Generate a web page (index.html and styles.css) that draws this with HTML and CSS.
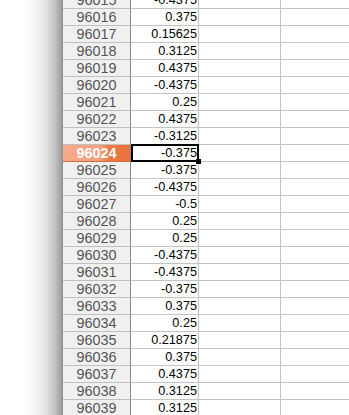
FILE: index.html
```html
<!DOCTYPE html>
<html>
<head>
<meta charset="utf-8">
<link rel="stylesheet" href="styles.css">
</head>
<body>
<div class="page">
  <div class="shadow"></div>
  <div class="sheet">
    <div class="row"><div class="hdr">96015</div><div class="cell num">-0.4375</div><div class="cell b"></div><div class="cell c"></div></div>
    <div class="row"><div class="hdr">96016</div><div class="cell num">0.375</div><div class="cell b"></div><div class="cell c"></div></div>
    <div class="row"><div class="hdr">96017</div><div class="cell num">0.15625</div><div class="cell b"></div><div class="cell c"></div></div>
    <div class="row"><div class="hdr">96018</div><div class="cell num">0.3125</div><div class="cell b"></div><div class="cell c"></div></div>
    <div class="row"><div class="hdr">96019</div><div class="cell num">0.4375</div><div class="cell b"></div><div class="cell c"></div></div>
    <div class="row"><div class="hdr">96020</div><div class="cell num">-0.4375</div><div class="cell b"></div><div class="cell c"></div></div>
    <div class="row"><div class="hdr">96021</div><div class="cell num">0.25</div><div class="cell b"></div><div class="cell c"></div></div>
    <div class="row"><div class="hdr">96022</div><div class="cell num">0.4375</div><div class="cell b"></div><div class="cell c"></div></div>
    <div class="row"><div class="hdr">96023</div><div class="cell num">-0.3125</div><div class="cell b"></div><div class="cell c"></div></div>
    <div class="row"><div class="hdr active">96024</div><div class="cell num selected">-0.375</div><div class="cell b"></div><div class="cell c"></div></div>
    <div class="row"><div class="hdr">96025</div><div class="cell num">-0.375</div><div class="cell b"></div><div class="cell c"></div></div>
    <div class="row"><div class="hdr">96026</div><div class="cell num">-0.4375</div><div class="cell b"></div><div class="cell c"></div></div>
    <div class="row"><div class="hdr">96027</div><div class="cell num">-0.5</div><div class="cell b"></div><div class="cell c"></div></div>
    <div class="row"><div class="hdr">96028</div><div class="cell num">0.25</div><div class="cell b"></div><div class="cell c"></div></div>
    <div class="row"><div class="hdr">96029</div><div class="cell num">0.25</div><div class="cell b"></div><div class="cell c"></div></div>
    <div class="row"><div class="hdr">96030</div><div class="cell num">-0.4375</div><div class="cell b"></div><div class="cell c"></div></div>
    <div class="row"><div class="hdr">96031</div><div class="cell num">-0.4375</div><div class="cell b"></div><div class="cell c"></div></div>
    <div class="row"><div class="hdr">96032</div><div class="cell num">-0.375</div><div class="cell b"></div><div class="cell c"></div></div>
    <div class="row"><div class="hdr">96033</div><div class="cell num">0.375</div><div class="cell b"></div><div class="cell c"></div></div>
    <div class="row"><div class="hdr">96034</div><div class="cell num">0.25</div><div class="cell b"></div><div class="cell c"></div></div>
    <div class="row"><div class="hdr">96035</div><div class="cell num">0.21875</div><div class="cell b"></div><div class="cell c"></div></div>
    <div class="row"><div class="hdr">96036</div><div class="cell num">0.375</div><div class="cell b"></div><div class="cell c"></div></div>
    <div class="row"><div class="hdr">96037</div><div class="cell num">0.4375</div><div class="cell b"></div><div class="cell c"></div></div>
    <div class="row"><div class="hdr">96038</div><div class="cell num">0.3125</div><div class="cell b"></div><div class="cell c"></div></div>
    <div class="row"><div class="hdr">96039</div><div class="cell num">0.3125</div><div class="cell b"></div><div class="cell c"></div></div>
  </div>
</div>
</body>
</html>
```
FILE: styles.css
```css
html, body {
  margin: 0;
  padding: 0;
  background: #ffffff;
  overflow: hidden;
}
.page {
  display: flex;
  width: 349px;
  height: 415px;
  overflow: hidden;
}
.shadow {
  width: 63px;
  flex: none;
  background: linear-gradient(to right, #ffffff 0%, #ffffff 35%, #f6f6f6 55%, #e4e4e4 72%, #c6c6c6 86%, #a4a4a4 96%, #8e8e8e 100%);
}
.sheet {
  flex: 1;
  margin-top: -8px;
  display: flex;
  flex-direction: column;
}
.row {
  display: grid;
  grid-template-columns: 68px 68px 82px 1fr;
  height: 17px;
}
.hdr, .cell {
  box-sizing: border-box;
  height: 17px;
  border-bottom: 1px solid #c3c3c3;
  border-right: 1px solid #c3c3c3;
  font-family: "Liberation Sans", Arial, sans-serif;
  line-height: 16px;
  white-space: nowrap;
}
.hdr {
  background: #f0f0f0;
  color: #555555;
  font-size: 14.4px;
  text-align: center;
  border-right-color: #8a8a8a;
  border-bottom-color: #c0c0c0;
}
.hdr.active {
  background: linear-gradient(to right, #f6ab8c 0%, #f4a07e 55%, #ec7a45 68%, #e9733c 100%);
  color: #ffffff;
  font-weight: bold;
  border-bottom-color: #e06a35;
}
.cell {
  background: #ffffff;
  color: #000000;
  font-size: 12.7px;
}
.num {
  text-align: right;
  padding-right: 1px;
}
.c {
  border-right: none;
}
.selected {
  position: relative;
}
.selected::before {
  content: "";
  position: absolute;
  top: -1px;
  left: 0;
  right: -1px;
  bottom: -1px;
  border: 2px solid #000000;
}
.selected::after {
  content: "";
  position: absolute;
  right: -3px;
  bottom: -3px;
  width: 5px;
  height: 5px;
  background: #000000;
}
```
